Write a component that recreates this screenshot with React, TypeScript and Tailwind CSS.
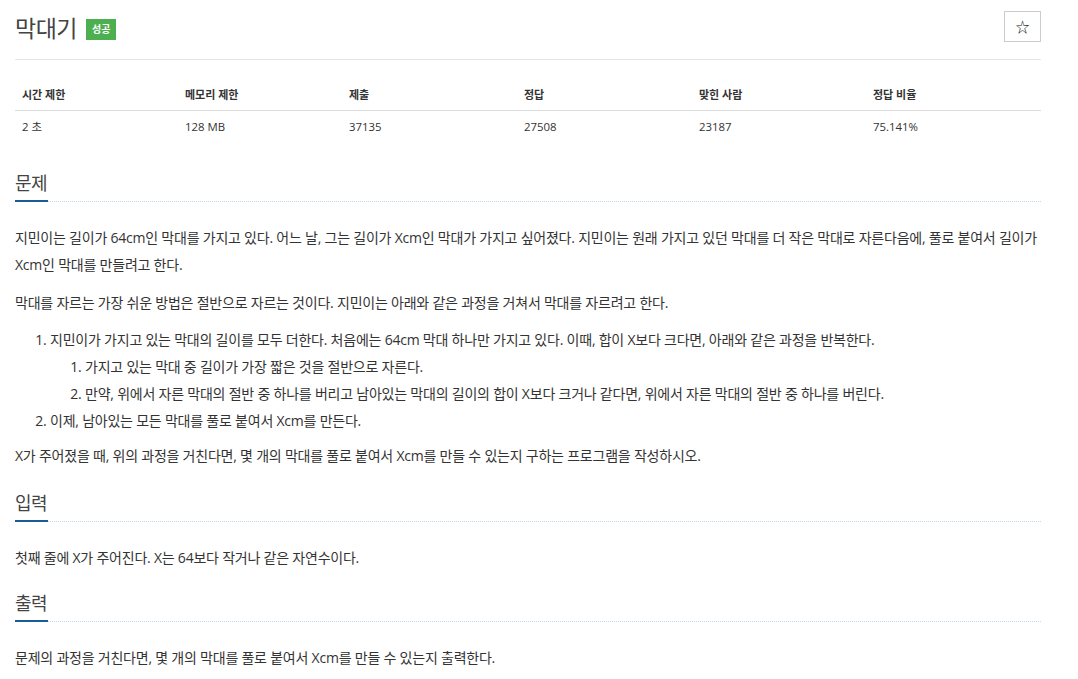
import React from "react";

const font = { fontFamily: '"Open Sans", "Noto Sans CJK KR", sans-serif' };

function Heading({ children }: { children: React.ReactNode }) {
  return (
    <div className="border-b border-dotted border-[#c5d9ec] mb-[22px]">
      <h2 className="inline-block text-[18px] leading-[28px] tracking-[-0.5px] text-[#444] pb-[3px] border-b-2 border-[#1a5c96] mb-[-1px] pr-[1px]">
        {children}
      </h2>
    </div>
  );
}

export default function App() {
  const cols = [
    ["시간 제한", "2 초", "w-[163px]"],
    ["메모리 제한", "128 MB", "w-[164px]"],
    ["제출", "37135", "w-[175px]"],
    ["정답", "27508", "w-[175px]"],
    ["맞힌 사람", "23187", "w-[174px]"],
    ["정답 비율", "75.141%", "w-[175px]"],
  ];
  return (
    <div className="bg-white min-h-[679px] pl-[15px] pr-[37px] text-[#333]" style={font}>
      <div className="flex items-start justify-between pt-[11px] pb-[16px] border-b border-[#e5e5e5]">
        <div className="flex items-center gap-[9px] pt-[2px]">
          <span className="text-[23px] leading-[30px] tracking-[-0.5px] text-[#444]">막대기</span>
          <span className="bg-[#4caf50] text-white text-[10px] font-bold leading-[21px] px-[6px] mt-[3px]">성공</span>
        </div>
        <button className="w-[37px] h-[31px] border border-[#ccc] flex items-center justify-center text-[14px] text-[#222]">
          ☆
        </button>
      </div>

      <table className="mt-[20px] w-[1026px] table-fixed text-[11px] border-collapse">
        <thead>
          <tr className="border-b border-[#ddd]">
            {cols.map(([h, , w]) => (
              <th key={h} className={`${w} text-left font-bold px-[7px] h-[30px]`}>{h}</th>
            ))}
          </tr>
        </thead>
        <tbody>
          <tr>
            {cols.map(([h, v]) => (
              <td key={h} className="px-[7px] h-[33px] text-[11.4px]">{v}</td>
            ))}
          </tr>
        </tbody>
      </table>

      <div className="mt-[26px] text-[14px] leading-[27px] tracking-[-0.22px]">
        <Heading>문제</Heading>
        <p className="mb-[11px]">
          지민이는 길이가 64cm인 막대를 가지고 있다. 어느 날, 그는 길이가 Xcm인 막대가 가지고 싶어졌다. 지민이는 원래 가지고 있던 막대를 더 작은 막대로 자른다음에, 풀로 붙여서 길이가 Xcm인 막대를 만들려고 한다.
        </p>
        <p className="mb-[10px]">막대를 자르는 가장 쉬운 방법은 절반으로 자르는 것이다. 지민이는 아래와 같은 과정을 거쳐서 막대를 자르려고 한다.</p>
        <ol className="list-decimal pl-[35px] mb-[8px]">
          <li>
            지민이가 가지고 있는 막대의 길이를 모두 더한다. 처음에는 64cm 막대 하나만 가지고 있다. 이때, 합이 X보다 크다면, 아래와 같은 과정을 반복한다.
            <ol className="list-decimal pl-[35px]">
              <li>가지고 있는 막대 중 길이가 가장 짧은 것을 절반으로 자른다.</li>
              <li>만약, 위에서 자른 막대의 절반 중 하나를 버리고 남아있는 막대의 길이의 합이 X보다 크거나 같다면, 위에서 자른 막대의 절반 중 하나를 버린다.</li>
            </ol>
          </li>
          <li>이제, 남아있는 모든 막대를 풀로 붙여서 Xcm를 만든다.</li>
        </ol>
        <p className="mb-[20px]">X가 주어졌을 때, 위의 과정을 거친다면, 몇 개의 막대를 풀로 붙여서 Xcm를 만들 수 있는지 구하는 프로그램을 작성하시오.</p>

        <Heading>입력</Heading>
        <p className="mb-[18px]">첫째 줄에 X가 주어진다. X는 64보다 작거나 같은 자연수이다.</p>

        <Heading>출력</Heading>
        <p>문제의 과정을 거친다면, 몇 개의 막대를 풀로 붙여서 Xcm를 만들 수 있는지 출력한다.</p>
      </div>
    </div>
  );
}
